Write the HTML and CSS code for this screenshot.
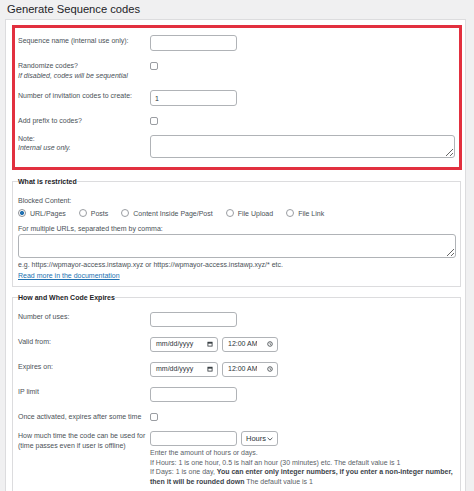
FILE: index.html
```html
<!DOCTYPE html>
<html lang="en">
<head>
<meta charset="utf-8">
<title>Generate Sequence codes</title>
<link rel="stylesheet" href="styles.css">
</head>
<body>
<h1 class="title">Generate Sequence codes</h1>
<div class="panel">
  <div class="highlight">
    <div class="row r-first">
      <div class="lbl pad">Sequence name (internal use only):</div>
      <div class="ctl"><input class="text" type="text"></div>
    </div>
    <div class="row">
      <div class="lbl">Randomize codes?<br><em>If disabled, codes will be sequential</em></div>
      <div class="ctl"><input class="check" type="checkbox"></div>
    </div>
    <div class="row">
      <div class="lbl pad">Number of invitation codes to create:</div>
      <div class="ctl"><input class="text" type="text" value="1"></div>
    </div>
    <div class="row">
      <div class="lbl">Add prefix to codes?</div>
      <div class="ctl"><input class="check" type="checkbox"></div>
    </div>
    <div class="row r-note">
      <div class="lbl">Note:<br><em>Internal use only.</em></div>
      <div class="ctl"><textarea class="area area-note"></textarea></div>
    </div>
  </div>

  <fieldset class="box box-restrict">
    <legend>What is restricted</legend>
    <div class="line">Blocked Content:</div>
    <div class="radios">
      <label class="radio"><input type="radio" name="bc" checked>URL/Pages</label>
      <label class="radio"><input type="radio" name="bc">Posts</label>
      <label class="radio"><input type="radio" name="bc">Content Inside Page/Post</label>
      <label class="radio"><input type="radio" name="bc">File Upload</label>
      <label class="radio"><input type="radio" name="bc">File Link</label>
    </div>
    <div class="line line-urls">For multiple URLs, separated them by comma:</div>
    <textarea class="area area-urls"></textarea>
    <div class="line line-eg">e.g. https://wpmayor-access.instawp.xyz or https://wpmayor-access.instawp.xyz/* etc.</div>
    <div class="line line-link"><a href="#">Read more in the documentation</a></div>
  </fieldset>

  <fieldset class="box box-expire">
    <legend>How and When Code Expires</legend>
    <div class="row r-first2">
      <div class="lbl">Number of uses:</div>
      <div class="ctl"><input class="text" type="text"></div>
    </div>
    <div class="row">
      <div class="lbl">Valid from:</div>
      <div class="ctl dt">
        <span class="picker date"><span class="ptxt">mm/dd/yyyy</span><svg class="ico" width="6" height="6" viewBox="0 0 6 6"><rect x="0.9" y="1.2" width="4.2" height="3.9" fill="none" stroke="#2c3338" stroke-width="0.8"/><rect x="0.9" y="1.2" width="4.2" height="1.4" fill="#2c3338"/></svg></span>
        <span class="picker time"><span class="ptxt ttxt">12:00 AM</span><svg class="ico" width="6" height="6" viewBox="0 0 6 6"><circle cx="3" cy="3" r="2.3" fill="none" stroke="#2c3338" stroke-width="0.75"/><path d="M3 1.7 V3.1 L4 3.8" fill="none" stroke="#2c3338" stroke-width="0.6"/></svg></span>
      </div>
    </div>
    <div class="row">
      <div class="lbl">Expires on:</div>
      <div class="ctl dt">
        <span class="picker date"><span class="ptxt">mm/dd/yyyy</span><svg class="ico" width="6" height="6" viewBox="0 0 6 6"><rect x="0.9" y="1.2" width="4.2" height="3.9" fill="none" stroke="#2c3338" stroke-width="0.8"/><rect x="0.9" y="1.2" width="4.2" height="1.4" fill="#2c3338"/></svg></span>
        <span class="picker time"><span class="ptxt ttxt">12:00 AM</span><svg class="ico" width="6" height="6" viewBox="0 0 6 6"><circle cx="3" cy="3" r="2.3" fill="none" stroke="#2c3338" stroke-width="0.75"/><path d="M3 1.7 V3.1 L4 3.8" fill="none" stroke="#2c3338" stroke-width="0.6"/></svg></span>
      </div>
    </div>
    <div class="row">
      <div class="lbl">IP limit</div>
      <div class="ctl"><input class="text" type="text"></div>
    </div>
    <div class="row">
      <div class="lbl">Once activated, expires after some time</div>
      <div class="ctl"><input class="check" type="checkbox"></div>
    </div>
    <div class="row">
      <div class="lbl">How much time the code can be used for<br>(time passes even if user is offline)</div>
      <div class="ctl">
        <div class="dt">
          <input class="text" type="text">
          <span class="select">
            <select><option>Hours</option><option>Days</option></select>
            <svg class="chev" width="6" height="4" viewBox="0 0 6 4"><path d="M0.6 0.8 L3 3.1 L5.4 0.8" fill="none" stroke="#2c3338" stroke-width="0.8"/></svg>
          </span>
        </div>
        <div class="help">
          Enter the amount of hours or days.<br>
          If Hours: 1 is one hour, 0.5 is half an hour (30 minutes) etc. The default value is 1<br>
          If Days: 1 is one day, <b>You can enter only integer numbers, if you enter a non-integer number,<br>then it will be rounded down</b> The default value is 1
        </div>
      </div>
    </div>
  </fieldset>
</div>
</body>
</html>
```

FILE: styles.css
```css
html { overflow: hidden; }
body {
  margin: 0;
  background: #f0f0f1;
  font-family: "Liberation Sans", Arial, sans-serif;
  font-size: 7px;
  line-height: 9.5px;
  color: #4a5157;
}
.title {
  margin: 0;
  height: 19px;
  box-sizing: border-box;
  padding: 3px 7px 0;
  font-size: 11.2px;
  line-height: 13px;
  font-weight: 400;
  color: #1d2327;
}
.panel {
  margin-left: 5px;
  width: 461px;
  height: 520px;
  box-sizing: border-box;
  background: #fff;
  border: 1px solid #dcdcde;
  padding: 5px 3px 0 6px;
}
.highlight {
  border: 3px solid #e2303f;
  padding: 7px 4px 9px 3px;
}
.row {
  display: grid;
  grid-template-columns: 132px 1fr;
  align-items: start;
  margin-top: 10px;
}
.r-first, .r-first2 { margin-top: 0; }
.r-note { margin-top: 8px; }
.lbl.pad { padding-top: 1px; }
.lbl em { font-style: italic; }
.ctl { min-width: 0; }
.dt { display: flex; gap: 4px; align-items: flex-start; }

input, textarea, select {
  font-family: inherit;
  font-size: 7px;
  color: #2c3338;
  margin: 0;
}
.text {
  box-sizing: border-box;
  width: 87px;
  height: 16px;
  padding: 0 4px;
  border: 1px solid #b0b3b7;
  border-radius: 3px;
  background: #fff;
}
.check {
  appearance: none;
  box-sizing: border-box;
  width: 8px;
  height: 8px;
  margin-top: 1px;
  border: 1px solid #9a9da2;
  border-radius: 2px;
  background: #fff;
  display: block;
}
.area {
  display: block;
  box-sizing: border-box;
  width: 100%;
  border: 1px solid #b0b3b7;
  border-radius: 3px;
  background: #fff;
  padding: 2px 4px;
}
.area-note { height: 23px; margin-top: 1px; }

.box {
  margin: 7px 1px 0 0;
  border: 1px solid #dcdcde;
  padding: 10px 4px 6px 5px;
  min-width: 0;
}
.box legend {
  padding: 0;
  font-weight: 700;
  color: #1d2327;
}
.radios {
  display: flex;
  align-items: center;
  margin-top: 3px;
  height: 9.5px;
}
.radio {
  display: flex;
  align-items: center;
  gap: 4px;
  margin-right: 13px;
}
.radio input {
  appearance: none;
  box-sizing: border-box;
  width: 8px;
  height: 8px;
  border: 1px solid #9a9da2;
  border-radius: 50%;
  background: #fff;
}
.radio input:checked {
  border-color: #8c8f94;
  background: radial-gradient(circle, #2271b1 0 1.8px, #fff 2.3px);
}
.line-urls { margin-top: 6px; }
.area-urls { height: 24px; margin-top: 0; }
.line-eg { margin-top: 2px; }
.line-link { margin-top: 1.5px; }
.line-link a { color: #2271b1; text-decoration: underline; }

.box-expire {
  margin-top: 6px;
  padding-top: 9px;
  padding-bottom: 40px;
}
.picker {
  box-sizing: border-box;
  display: flex;
  align-items: center;
  justify-content: space-between;
  height: 15px;
  padding: 0 4px 0 5px;
  border: 1px solid #b0b3b7;
  border-radius: 3px;
  background: #fff;
  color: #2c3338;
}
.date { width: 68px; }
.time { width: 56px; }
.ttxt {
  display: block;
  width: 29px;
  overflow: hidden;
  white-space: nowrap;
}
.ico { display: block; flex: none; }
.box-expire .text { height: 15px; }
.select {
  position: relative;
  display: block;
}
.select select {
  appearance: none;
  box-sizing: border-box;
  width: 37px;
  height: 15px;
  padding: 0 10px 0 4px;
  border: 1px solid #b0b3b7;
  border-radius: 3px;
  background: #fff;
  font-size: 7.5px;
}
.chev {
  position: absolute;
  right: 5px;
  top: 6px;
  pointer-events: none;
}
.help {
  margin-top: 2px;
  line-height: 9.7px;
  color: #5a6167;
  white-space: nowrap;
}
.help b { font-weight: 700; color: #3c434a; }
```
